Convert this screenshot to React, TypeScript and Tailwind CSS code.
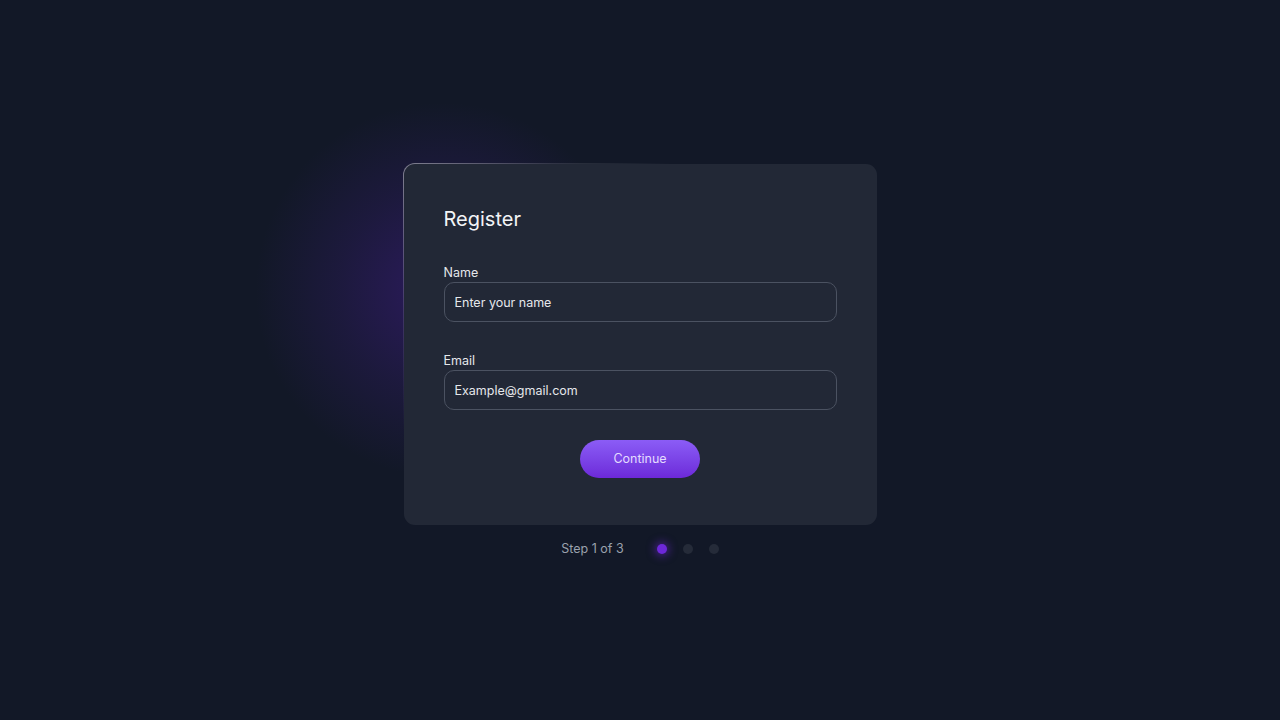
export default function App() {
  return (
    <div
      className="relative flex min-h-screen w-full flex-col items-center overflow-hidden bg-[#121827] pt-[163px] text-gray-200"
      style={{ fontFamily: "Inter, 'Noto Sans', sans-serif" }}
    >
      {/* purple glow behind the card */}
      <div className="pointer-events-none absolute left-[248px] top-[95px] h-[390px] w-[390px] rounded-full bg-[radial-gradient(circle,rgba(80,30,170,0.42)_0%,rgba(62,30,130,0.24)_38%,rgba(18,24,39,0)_68%)]" />

      <div className="relative rounded-xl bg-[linear-gradient(135deg,rgba(255,255,255,0.45)_0%,rgba(255,255,255,0.12)_18%,rgba(255,255,255,0)_32%)] p-px">
        <div className="flex w-[473px] flex-col rounded-[11px] bg-[#222836] px-10 pb-[47px] pt-[41px]">
          <h1 className="text-xl leading-7 text-gray-100">Register</h1>

          <label className="mt-8 text-[12.5px] leading-4 text-gray-200">Name</label>
          <input
            className="mt-px h-10 rounded-[10px] border border-[#4b5261] bg-transparent px-[10px] text-[12.5px] text-gray-200 outline-none placeholder:text-gray-200"
            placeholder="Enter your name"
          />

          <label className="mt-[31px] text-[12.5px] leading-4 text-gray-200">Email</label>
          <input
            className="mt-px h-10 rounded-[10px] border border-[#4b5261] bg-transparent px-[10px] text-[12.5px] text-gray-200 outline-none placeholder:text-gray-200"
            placeholder="Example@gmail.com"
          />

          <button className="mx-auto mt-[30px] h-[38px] w-[120px] rounded-full bg-gradient-to-b from-[#8b5cf6] to-[#6d28d9] text-[12.5px] text-[#e4dcff]">
            Continue
          </button>
        </div>
      </div>

      <div className="relative mt-[15px] flex items-center">
        <span className="text-[12.5px] leading-4 text-[#9aa1ad]">Step 1 of 3</span>
        <div className="ml-[33px] flex items-center gap-4">
          <span className="h-[10px] w-[10px] rounded-full bg-[#6d28d9] shadow-[0_0_8px_2px_rgba(109,40,217,0.55)]" />
          <span className="h-[10px] w-[10px] rounded-full bg-[#252b39]" />
          <span className="h-[10px] w-[10px] rounded-full bg-[#252b39]" />
        </div>
      </div>
    </div>
  )
}
